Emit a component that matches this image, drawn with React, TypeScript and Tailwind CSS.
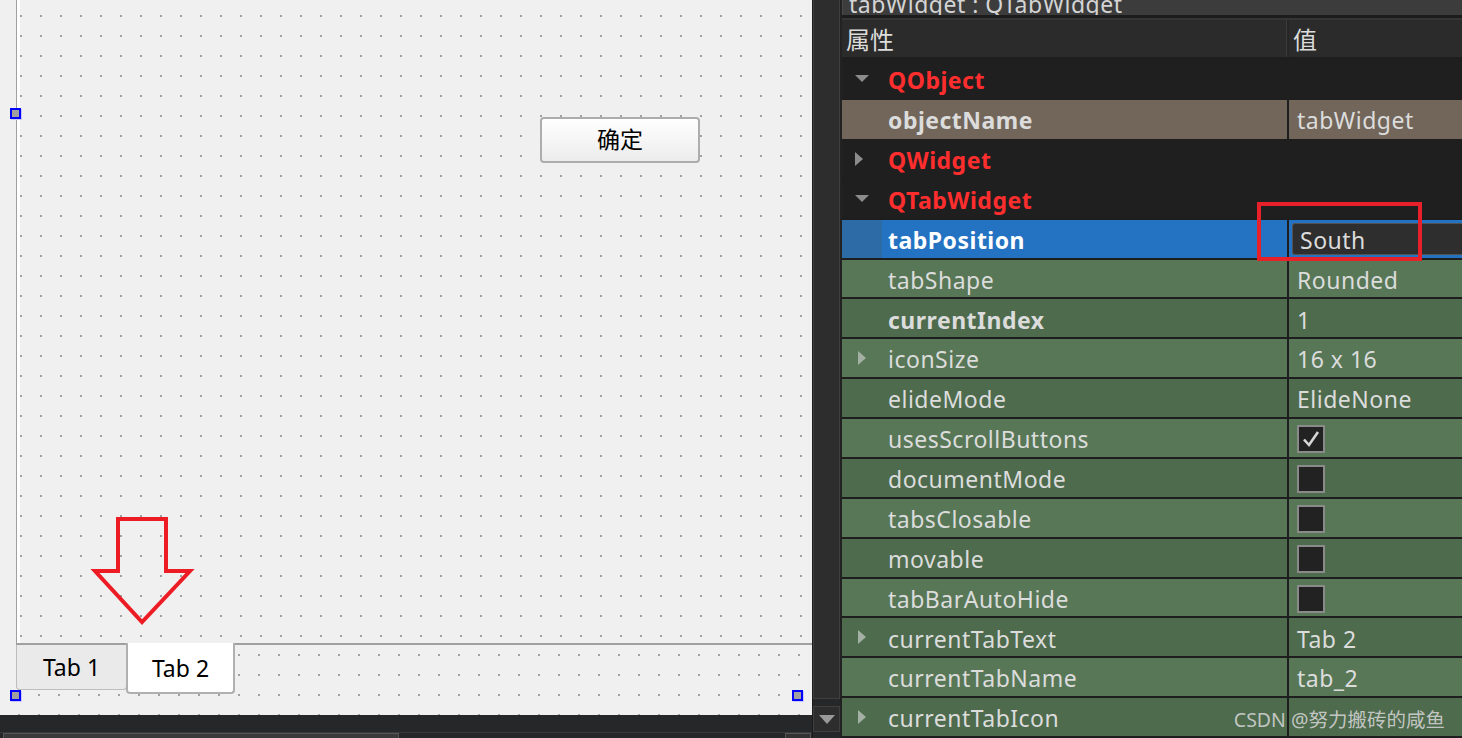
import React from 'react';

const font = "font-['Noto_Sans','Noto_Sans_CJK_SC',sans-serif]";

function DotGrid({ id, ox, oy }: { id: string; ox: number; oy: number }) {
  return (
    <svg className="absolute inset-0 h-full w-full" aria-hidden>
      <defs>
        <pattern id={id} x={ox} y={oy} width="20" height="20" patternUnits="userSpaceOnUse">
          <rect width="2" height="2" fill="#a0a0a0" />
        </pattern>
      </defs>
      <rect width="100%" height="100%" fill={`url(#${id})`} />
    </svg>
  );
}

function Handle({ className }: { className: string }) {
  return (
    <div
      className={`absolute h-[11px] w-[11px] border-2 border-[#0000ff] bg-[#a0a0a0] shadow-[1px_1px_0_#c8c8ff] ${className}`}
    />
  );
}

function Canvas() {
  return (
    <div className="relative h-[715px] w-[812px] overflow-hidden bg-[#f0f0f0]">
      <DotGrid id="form" ox={18} oy={14} />

      {/* tab widget pane */}
      <div className="absolute left-[16px] top-0 h-[645px] w-[796px] border-b-2 border-l border-[#a0a0a0] bg-[#f0f0f0]">
        <DotGrid id="pane" ox={3} oy={15} />
        <div className="absolute left-0 top-0 h-full w-[3px] bg-white" />
      </div>

      {/* tabs */}
      <div className="absolute left-[16px] top-[645px] flex items-start">
        <div className="flex h-[45px] w-[111px] items-center justify-center rounded-b-[4px] border border-t-0 border-[#bdbdbd] bg-[#eaeaea] pt-[1px] text-[23px] text-black">
          Tab 1
        </div>
        <div className="-mt-[2px] -ml-px flex h-[51px] w-[109px] items-center justify-center rounded-b-[4px] border-2 border-t-0 border-[#b0b0b0] bg-white pt-[2px] text-[23px] text-black">
          Tab 2
        </div>
      </div>

      {/* push button */}
      <div className="absolute left-[540px] top-[117px] flex h-[46px] w-[160px] items-center justify-center rounded-[4px] border-2 border-[#adadad] bg-gradient-to-b from-white to-[#ececec] pb-[1px] text-[23px] text-black">
        确定
      </div>

      <Handle className="left-[10px] top-[108px]" />
      <Handle className="left-[10px] top-[690px]" />
      <Handle className="left-[792px] top-[690px]" />

      {/* annotation arrow */}
      <svg className="absolute left-0 top-0" width="812" height="715" aria-hidden>
        <polygon
          points="118,519 166,519 166,571 190,571 142,622 95,571 118,571"
          fill="none"
          stroke="#ed1c24"
          strokeWidth="4"
          strokeLinejoin="miter"
        />
      </svg>
    </div>
  );
}

function BottomStrip() {
  return (
    <div className="flex h-[23px] w-[812px] flex-col bg-[#262729]">
      <div className="h-[17px]" />
      <div className="flex h-[6px] items-stretch border-t border-[#3a3a3a]">
        <div className="w-[3px]" />
        <div className="w-[396px] border-x border-t border-[#555] bg-[#3a3a3a]" />
        <div className="flex-1" />
        <div className="mr-[1px] w-[26px] border-x border-t border-[#555] bg-[#333]" />
      </div>
    </div>
  );
}

function VScroll() {
  return (
    <div className="flex h-[738px] w-[30px] flex-col border-l border-r-2 border-l-[#1b1b1b] border-r-[#222] bg-[#262729]">
      <div className="h-[699px] border-x border-b border-[#3f3f3f] bg-[#2d2d2d]" />
      <div className="h-[7px]" />
      <div className="flex h-[26px] items-center justify-center border border-[#3f3f3f] bg-[#2d2d2d]">
        <svg width="16" height="9" viewBox="0 0 16 9" aria-hidden>
          <polygon points="0,0 16,0 8,9" fill="#9a9a9a" />
        </svg>
      </div>
    </div>
  );
}

function Tri({ dir, color }: { dir: 'down' | 'right'; color: string }) {
  return dir === 'down' ? (
    <svg width="14" height="8" viewBox="0 0 14 8" aria-hidden>
      <polygon points="0,0 14,0 7,7" fill={color} />
    </svg>
  ) : (
    <svg width="8" height="14" viewBox="0 0 8 14" aria-hidden>
      <polygon points="0,0 8,7 0,14" fill={color} />
    </svg>
  );
}

function CheckBox({ checked }: { checked?: boolean }) {
  return (
    <div className="flex h-[28px] w-[28px] items-center justify-center border-2 border-[#8a8a8a] bg-[#222]">
      {checked && (
        <svg width="22" height="22" viewBox="0 0 22 22" aria-hidden>
          <path d="M4 11.5 L9 17 L18 4" fill="none" stroke="#d6d6d6" strokeWidth="2.6" />
        </svg>
      )}
    </div>
  );
}

function Category({ name, open }: { name: string; open: boolean }) {
  return (
    <div className="flex h-[40px] items-center border-b-2 border-[#1e1e1e] bg-[#1f1f1f]">
      <div className="flex w-[46px] justify-start pl-[13px]">
        <Tri dir={open ? 'down' : 'right'} color="#8c8c8c" />
      </div>
      <span className="pt-[3px] text-[23px] font-bold tracking-[0.5px] text-[#ff2e2e]">{name}</span>
    </div>
  );
}

type PropRow = {
  name: string;
  value?: React.ReactNode;
  bold?: boolean;
  expand?: boolean;
};

function Prop({ row, shade }: { row: PropRow; shade: string }) {
  return (
    <div className={`flex h-[40px] border-b-2 border-[#1e1e1e] ${shade}`}>
      <div className="flex w-[445px] items-center">
        <div className="flex w-[46px] pl-[16px]">
          {row.expand && <Tri dir="right" color="#a3b0a3" />}
        </div>
        <span className={`pt-[3px] text-[23px] tracking-[0.5px] text-[#dcdcdc] ${row.bold ? 'font-bold' : ''}`}>
          {row.name}
        </span>
      </div>
      <div className="w-[2px] bg-[#1e1e1e]" />
      <div className="flex flex-1 items-center pl-[8px] pt-[3px] text-[23px] tracking-[0.5px] text-[#dcdcdc]">
        {row.value}
      </div>
    </div>
  );
}

const greenRows: PropRow[] = [
  { name: 'tabShape', value: 'Rounded' },
  { name: 'currentIndex', value: '1', bold: true },
  { name: 'iconSize', value: '16 x 16', expand: true },
  { name: 'elideMode', value: 'ElideNone' },
  { name: 'usesScrollButtons', value: <CheckBox checked /> },
  { name: 'documentMode', value: <CheckBox /> },
  { name: 'tabsClosable', value: <CheckBox /> },
  { name: 'movable', value: <CheckBox /> },
  { name: 'tabBarAutoHide', value: <CheckBox /> },
  { name: 'currentTabText', value: 'Tab 2', expand: true },
  { name: 'currentTabName', value: 'tab_2' },
  { name: 'currentTabIcon', value: '', expand: true },
];

function PropertyPanel() {
  return (
    <div className="flex h-[738px] w-[620px] flex-col overflow-hidden bg-[#1e1e1e]">
      <div className="h-[15px] overflow-hidden border-l border-[#4a4a4a] bg-[#3c3c3c] pl-[6px]">
        <div className="-mt-[11px] whitespace-nowrap text-[23px] leading-[31px] tracking-[0.5px] text-[#d4d4d4]">
          tabWidget : QTabWidget
        </div>
      </div>
      <div className="h-[3px] bg-[#1c1c1c]" />
      <div className="h-[2px] bg-[#353535]" />
      <div className="flex h-[37px] items-center bg-[#2b2b2b] text-[24px] text-[#dcdcdc]">
        <div className="w-[444px] pl-[4px] pt-[3px]">属性</div>
        <div className="h-full w-[3px] border-l border-[#3c3c3c] bg-[#262626]" />
        <div className="pl-[4px] pt-[3px]">值</div>
      </div>
      <div className="h-[3px] bg-[#1e1e1e]" />

      <Category name="QObject" open />
      <div className="flex h-[40px] border-b border-[#1e1e1e] bg-[#72665a]">
        <div className="flex w-[445px] items-center pl-[46px]">
          <span className="pt-[3px] text-[23px] font-bold tracking-[0.5px] text-[#dcdcdc]">objectName</span>
        </div>
        <div className="w-[2px] bg-[#1e1e1e]" />
        <div className="flex flex-1 items-center pl-[8px] pt-[3px] text-[23px] tracking-[0.5px] text-[#dcdcdc]">
          tabWidget
        </div>
      </div>
      <div className="h-0 border-t border-[#5a5a5a]" />
      <div className="-mt-px">
        <Category name="QWidget" open={false} />
      </div>
      <Category name="QTabWidget" open />

      {/* selected row */}
      <div className="flex h-[40px] border-b-2 border-[#1e1e1e] bg-[#2473c2]">
        <div className="w-[40px] bg-[#2d6ba6]" />
        <div className="flex w-[405px] items-center pl-[6px]">
          <span className="pt-[3px] text-[23px] font-bold tracking-[0.5px] text-white">tabPosition</span>
        </div>
        <div className="w-[2px] bg-[#1e1e1e]" />
        <div className="flex flex-1 items-center py-[3px] pl-[3px]">
          <div className="flex h-full flex-1 items-center rounded-l-[3px] border border-r-0 border-[#525252] bg-[#2e2e2e] pl-[7px] pt-[3px] text-[23px] tracking-[0.5px] text-[#dcdcdc]">
            South
          </div>
        </div>
      </div>

      {greenRows.map((row, i) => (
        <Prop key={row.name} row={row} shade={i % 2 === 0 ? 'bg-[#577757]' : 'bg-[#4e6b4d]'} />
      ))}
    </div>
  );
}

export default function App() {
  return (
    <div className={`relative flex h-[738px] w-[1462px] overflow-hidden bg-[#262729] ${font}`}>
      <div className="flex flex-col">
        <Canvas />
        <BottomStrip />
      </div>
      <VScroll />
      <PropertyPanel />

      {/* annotation box round the value */}
      <div className="absolute left-[1257px] top-[202px] h-[59px] w-[165px] border-[4px] border-[#e8202a]" />

      <div className="absolute right-[17px] top-[705px] whitespace-nowrap text-[19.5px] text-[#d2d2d2]/90">
        CSDN @努力搬砖的咸鱼
      </div>
    </div>
  );
}
